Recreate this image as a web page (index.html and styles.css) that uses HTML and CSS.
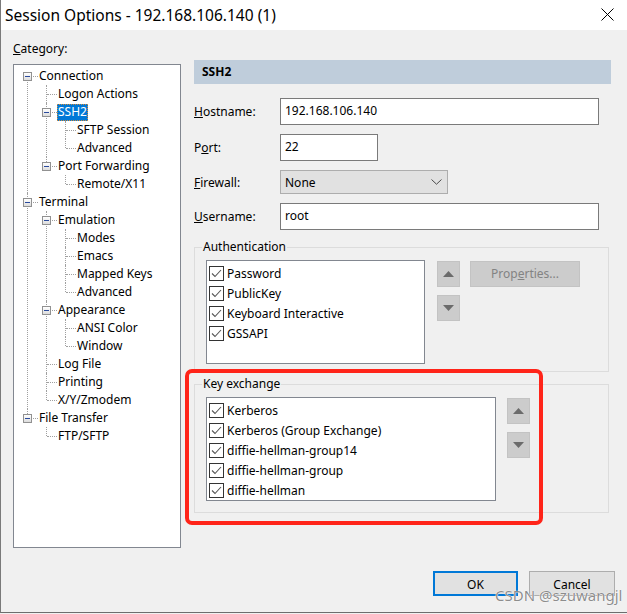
FILE: index.html
```html
<!DOCTYPE html>
<html>
<head>
<meta charset="utf-8">
<title>Session Options</title>
<link rel="stylesheet" href="styles.css">
</head>
<body>
<div class="window">
  <div class="titlebar">
    <span class="title">Session Options - 192.168.106.140 (1)</span>
    <svg class="close" width="13" height="13" viewBox="0 0 13 13"><path d="M0.5 0.5L12.5 12.5M12.5 0.5L0.5 12.5" stroke="#000" stroke-width="1" fill="none"/></svg>
  </div>
  <div class="client">
    <div class="main">
      <div class="leftcol">
        <div class="cat-label"><u>C</u>ategory:</div>
        <div class="tree">
          <ul>
            <li class="first"><div class="row"><span class="exp"></span>Connection</div>
              <ul>
                <li><div class="row">Logon Actions</div></li>
                <li><div class="row"><span class="exp"></span><span class="sel">SSH2</span></div>
                  <ul>
                    <li><div class="row">SFTP Session</div></li>
                    <li class="last"><div class="row">Advanced</div></li>
                  </ul>
                </li>
                <li class="last"><div class="row"><span class="exp"></span>Port Forwarding</div>
                  <ul>
                    <li class="last"><div class="row">Remote/X11</div></li>
                  </ul>
                </li>
              </ul>
            </li>
            <li><div class="row"><span class="exp"></span>Terminal</div>
              <ul>
                <li><div class="row"><span class="exp"></span>Emulation</div>
                  <ul>
                    <li><div class="row">Modes</div></li>
                    <li><div class="row">Emacs</div></li>
                    <li><div class="row">Mapped Keys</div></li>
                    <li class="last"><div class="row">Advanced</div></li>
                  </ul>
                </li>
                <li><div class="row"><span class="exp"></span>Appearance</div>
                  <ul>
                    <li><div class="row">ANSI Color</div></li>
                    <li class="last"><div class="row">Window</div></li>
                  </ul>
                </li>
                <li><div class="row">Log File</div></li>
                <li><div class="row">Printing</div></li>
                <li class="last"><div class="row">X/Y/Zmodem</div></li>
              </ul>
            </li>
            <li class="last"><div class="row"><span class="exp"></span>File Transfer</div>
              <ul>
                <li class="last"><div class="row">FTP/SFTP</div></li>
              </ul>
            </li>
          </ul>
        </div>
      </div>

      <div class="rightcol">
        <div class="header">SSH2</div>
        <div class="form">
          <label><u>H</u>ostname:</label>
          <div class="input wide">192.168.106.140</div>
          <label>P<u>o</u>rt:</label>
          <div class="input port">22</div>
          <label><u>F</u>irewall:</label>
          <div class="select"><span>None</span><svg width="11" height="6" viewBox="0 0 11 6"><path d="M0.5 0.5L5.5 5.2L10.5 0.5" stroke="#4a4a4a" fill="none"/></svg></div>
          <label><u>U</u>sername:</label>
          <div class="input wide">root</div>
        </div>

        <fieldset class="group auth">
          <legend>Authentication</legend>
          <div class="gbody">
            <div class="list auth-list">
              <div class="item"><span class="cb"><svg width="13" height="13" viewBox="0 0 13 13"><path d="M2 6.5L5 9.5L11 3" stroke="#555" stroke-width="1.1" fill="none"/></svg></span>Password</div>
              <div class="item"><span class="cb"><svg width="13" height="13" viewBox="0 0 13 13"><path d="M2 6.5L5 9.5L11 3" stroke="#555" stroke-width="1.1" fill="none"/></svg></span>PublicKey</div>
              <div class="item"><span class="cb"><svg width="13" height="13" viewBox="0 0 13 13"><path d="M2 6.5L5 9.5L11 3" stroke="#555" stroke-width="1.1" fill="none"/></svg></span>Keyboard Interactive</div>
              <div class="item"><span class="cb"><svg width="13" height="13" viewBox="0 0 13 13"><path d="M2 6.5L5 9.5L11 3" stroke="#555" stroke-width="1.1" fill="none"/></svg></span>GSSAPI</div>
            </div>
            <div class="arrows">
              <div class="arrow"><svg width="11" height="6" viewBox="0 0 11 6"><polygon points="5.5,0 11,6 0,6" fill="#6b6b6b"/></svg></div>
              <div class="arrow"><svg width="11" height="6" viewBox="0 0 11 6"><polygon points="0,0 11,0 5.5,6" fill="#6b6b6b"/></svg></div>
            </div>
            <div class="props">Prop<u>e</u>rties...</div>
          </div>
        </fieldset>

        <fieldset class="group kex">
          <legend>Key exchange</legend>
          <div class="gbody">
            <div class="list kex-list">
              <div class="item"><span class="cb"><svg width="13" height="13" viewBox="0 0 13 13"><path d="M2 6.5L5 9.5L11 3" stroke="#555" stroke-width="1.1" fill="none"/></svg></span>Kerberos</div>
              <div class="item"><span class="cb"><svg width="13" height="13" viewBox="0 0 13 13"><path d="M2 6.5L5 9.5L11 3" stroke="#555" stroke-width="1.1" fill="none"/></svg></span>Kerberos (Group Exchange)</div>
              <div class="item"><span class="cb"><svg width="13" height="13" viewBox="0 0 13 13"><path d="M2 6.5L5 9.5L11 3" stroke="#555" stroke-width="1.1" fill="none"/></svg></span>diffie-hellman-group14</div>
              <div class="item"><span class="cb"><svg width="13" height="13" viewBox="0 0 13 13"><path d="M2 6.5L5 9.5L11 3" stroke="#555" stroke-width="1.1" fill="none"/></svg></span>diffie-hellman-group</div>
              <div class="item"><span class="cb"><svg width="13" height="13" viewBox="0 0 13 13"><path d="M2 6.5L5 9.5L11 3" stroke="#555" stroke-width="1.1" fill="none"/></svg></span>diffie-hellman</div>
            </div>
            <div class="arrows">
              <div class="arrow"><svg width="11" height="6" viewBox="0 0 11 6"><polygon points="5.5,0 11,6 0,6" fill="#6b6b6b"/></svg></div>
              <div class="arrow"><svg width="11" height="6" viewBox="0 0 11 6"><polygon points="0,0 11,0 5.5,6" fill="#6b6b6b"/></svg></div>
            </div>
          </div>
        </fieldset>
      </div>
    </div>

    <div class="footer">
      <div class="btn ok">OK</div>
      <div class="btn cancel">Cancel</div>
    </div>
  </div>

  <div class="highlight"></div>
  <div class="watermark">CSDN @szuwangjl</div>
</div>
</body>
</html>
```

FILE: styles.css
```css
* { box-sizing: border-box; }
html, body { margin: 0; padding: 0; }
body {
  background: #f0f0f0;
  font-family: "Noto Sans", "Open Sans", sans-serif;
  font-size: 12px;
  color: #000;
  width: 627px;
  height: 614px;
  overflow: hidden;
}
.window {
  position: relative;
  width: 627px;
  height: 613px;
  border-left: 1px solid #7a7a7a;
  border-bottom: 1px solid #6d6d6d;
  background: #f0f0f0;
  display: flex;
  flex-direction: column;
}
.titlebar {
  flex: none;
  height: 30px;
  background: #fff;
  display: flex;
  align-items: center;
  justify-content: space-between;
  padding: 0 13px 0 4px;
}
.title { font-size: 15.5px; line-height: 30px; }
.close { display: block; margin-top: -1px; }

.client { flex: 1; display: flex; flex-direction: column; }
.main { display: flex; gap: 13px; padding-left: 12px; }

/* left column */
.leftcol { width: 168px; padding-top: 11px; }
.cat-label { height: 16px; line-height: 16px; }
.tree {
  margin-top: 7px;
  width: 168px;
  height: 484px;
  background: #fff;
  border: 1px solid #828790;
  padding-top: 2px;
}
.tree ul { list-style: none; margin: 0; padding: 0; }
.tree ul ul { padding-left: 19px; }
.tree li { position: relative; }
.tree li::before {
  content: "";
  position: absolute;
  left: 13px;
  top: 0;
  bottom: 0;
  border-left: 1px dotted #a0a0a0;
}
.tree li.last::before { bottom: auto; height: 9px; }
.tree li.first::before { top: 9px; }
.row {
  position: relative;
  height: 18px;
  line-height: 18px;
  padding-left: 25px;
  white-space: nowrap;
}
.row::before {
  content: "";
  position: absolute;
  left: 14px;
  top: 9px;
  width: 10px;
  border-top: 1px dotted #a0a0a0;
}
.exp {
  position: absolute;
  left: 9px;
  top: 5px;
  width: 9px;
  height: 9px;
  border: 1px solid #919191;
  background: linear-gradient(#ffffff, #dcdcdc);
  z-index: 1;
}
.exp::after {
  content: "";
  position: absolute;
  left: 1px;
  top: 3px;
  width: 5px;
  height: 1px;
  background: #2a4a9c;
}
.sel {
  display: inline-block;
  vertical-align: top;
  margin-top: 1px;
  margin-left: -1px;
  height: 17px;
  line-height: 16px;
  padding: 0 1px;
  background: #0078d7;
  color: #fff;
  outline: 1px dotted #d08a3c;
  outline-offset: -1px;
}

/* right column */
.rightcol { width: 417px; padding-top: 30px; }
.header {
  height: 24px;
  line-height: 24px;
  background: #bfcddb;
  font-weight: bold;
  padding-left: 8px;
}
.form {
  display: grid;
  grid-template-columns: 86px auto;
  row-gap: 9px;
  margin-top: 14px;
  align-items: center;
  justify-items: start;
}
.input {
  height: 27px;
  background: #fff;
  border: 1px solid #7a7a7a;
  padding-left: 4px;
  line-height: 24px;
}
.wide { width: 319px; }
.port { width: 98px; }
.select {
  width: 168px;
  height: 24px;
  background: #e1e1e1;
  border: 1px solid #adadad;
  display: flex;
  align-items: center;
  justify-content: space-between;
  padding: 0 5px 0 4px;
}
.select svg { display: block; }

.group {
  margin: 9px 0 0 0;
  padding: 5px 11px 7px 11px;
  border: 1px solid #dcdcdc;
  width: 415px;
  min-width: 0;
}
.group legend {
  padding: 0 1px;
  margin-left: -4px;
  line-height: 16px;
}
.kex { margin-top: 4px; padding-bottom: 11px; }
.gbody { display: flex; align-items: flex-start; }
.list {
  height: 104px;
  background: #fff;
  border: 1px solid #828790;
  padding: 2px 0 0 2px;
}
.auth-list { width: 219px; }
.kex-list { width: 290px; }
.item {
  height: 20px;
  display: flex;
  align-items: center;
  white-space: nowrap;
}
.cb {
  width: 15px;
  height: 15px;
  border: 1px solid #333;
  margin-right: 3px;
  display: flex;
  align-items: center;
  justify-content: center;
  flex: none;
}
.cb svg { display: block; }
.arrows {
  margin-left: 12px;
  margin-top: 1px;
  display: flex;
  flex-direction: column;
  gap: 8px;
}
.kex .arrows { margin-left: 11px; }
.arrow {
  width: 23px;
  height: 26px;
  background: #cccccc;
  border: 1px solid #c3c3c3;
  display: flex;
  align-items: center;
  justify-content: center;
}
.arrow svg { display: block; }
.props {
  margin-left: 10px;
  margin-top: 1px;
  width: 110px;
  height: 26px;
  background: #cccccc;
  border: 1px solid #c3c3c3;
  color: #838383;
  text-align: center;
  line-height: 24px;
}

/* footer */
.footer {
  margin-top: auto;
  display: flex;
  justify-content: flex-end;
  gap: 11px;
  padding: 0 12px 16px 0;
}
.btn {
  height: 25px;
  background: #e1e1e1;
  text-align: center;
}
.ok { width: 85px; border: 2px solid #0078d7; line-height: 23px; }
.cancel { width: 86px; border: 1px solid #adadad; line-height: 25px; }

/* overlays */
.highlight {
  position: absolute;
  left: 184px;
  top: 369px;
  width: 358px;
  height: 156px;
  border: 4px solid #ff2419;
  border-radius: 7px;
}
.watermark {
  position: absolute;
  left: 494px;
  top: 585px;
  font-size: 15px;
  line-height: 20px;
  color: rgba(120, 120, 120, 0.85);
  text-shadow: 0 0 1px #fff, 0 0 1px #fff;
  white-space: nowrap;
}
```
